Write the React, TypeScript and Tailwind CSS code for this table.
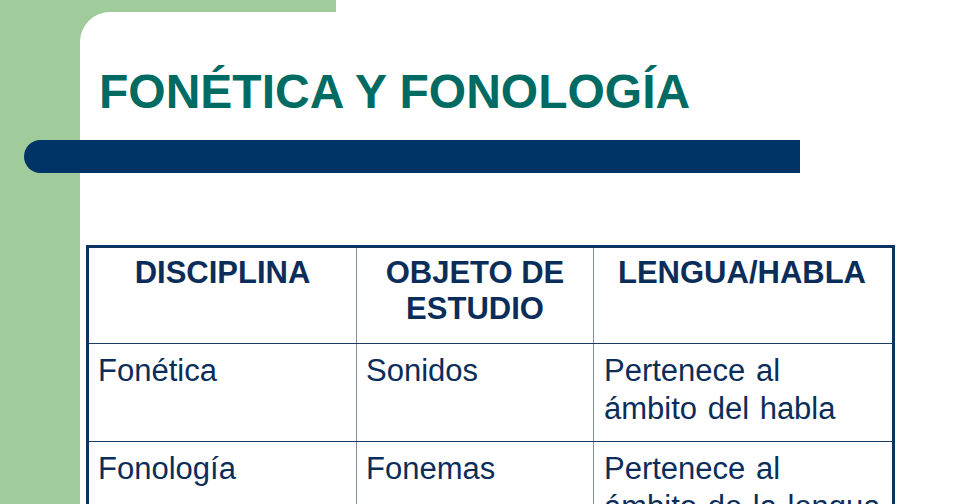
const rows = [
  { disciplina: 'Fonética', objeto: 'Sonidos', ambito: ['Pertenece al', 'ámbito del habla'] },
  { disciplina: 'Fonología', objeto: 'Fonemas', ambito: ['Pertenece al', 'ámbito de la lengua'] },
]

export default function App() {
  return (
    <div
      className="flex h-[504px] w-[960px] overflow-hidden bg-[#a0cc9c]"
      style={{ fontFamily: '"Liberation Sans", Arial, sans-serif' }}
    >
      <div className="w-[80px] shrink-0" />

      <div className="flex min-w-0 flex-1 flex-col">
        {/* top green band, then white */}
        <div className="flex h-[12px] shrink-0">
          <div className="w-[256px]" />
          <div className="flex-1 bg-white" />
        </div>

        <div className="flex-1 rounded-tl-[30px] bg-white">
          <h1 className="ml-[19px] mt-[56px] text-[48px] font-bold leading-[48px] text-[#006b63]">
            FONÉTICA Y FONOLOGÍA
          </h1>

          <div className="-ml-[56px] mt-[24px] h-[33px] w-[776px] rounded-l-full bg-[#003366]" />

          <div className="ml-[6px] mt-[72px] w-[809px] border-[3px] border-b-0 border-[#0d3461] text-[31px] text-[#0b2d5a]">
            <div className="grid h-[95px] grid-cols-[267px_237px_297px] font-bold leading-[36px]">
              <div className="px-2 pt-[7px] text-center">DISCIPLINA</div>
              <div className="border-l border-[#7f8ea3] px-2 pt-[7px] text-center">
                OBJETO DE ESTUDIO
              </div>
              <div className="border-l border-[#7f8ea3] px-2 pt-[7px] text-center">LENGUA/HABLA</div>
            </div>

            {rows.map((row) => (
              <div
                key={row.disciplina}
                className="grid h-[98px] grid-cols-[267px_237px_297px] border-t border-[#1c3a60] leading-[38px]"
              >
                <div className="pl-[9px] pt-[8px]">{row.disciplina}</div>
                <div className="border-l border-[#7f8ea3] pl-[9px] pt-[8px]">{row.objeto}</div>
                <div className="whitespace-nowrap border-l border-[#7f8ea3] pl-[10px] pt-[8px] [word-spacing:2px]">
                  {row.ambito.map((line) => (
                    <span key={line} className="block">{line}</span>
                  ))}
                </div>
              </div>
            ))}
          </div>
        </div>
      </div>
    </div>
  )
}
